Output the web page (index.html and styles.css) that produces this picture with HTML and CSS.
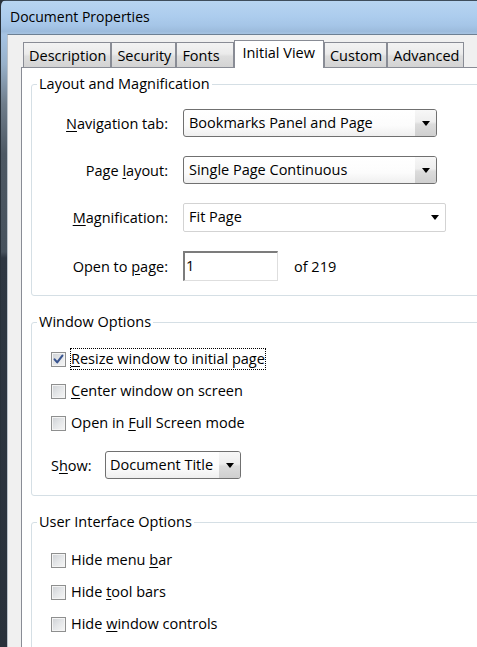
FILE: index.html
```html
<!DOCTYPE html>
<html lang="en">
<head>
<meta charset="utf-8">
<title>Document Properties</title>
<link rel="stylesheet" href="styles.css">
</head>
<body>
<div class="window">
  <div class="titlebar">Document Properties</div>
  <div class="frame">
    <div class="edge"></div>
    <div class="client">
      <div class="tabs">
        <div class="tab">Description</div>
        <div class="tab">Security</div>
        <div class="tab">Fonts</div>
        <div class="tab active">Initial View</div>
        <div class="tab">Custom</div>
        <div class="tab">Advanced</div>
      </div>
      <div class="panel">
        <fieldset class="group g1">
          <legend>Layout and Magnification</legend>
          <div class="form">
            <span class="lbl"><u>N</u>avigation tab:</span>
            <div class="combo c-nav"><span class="val">Bookmarks Panel and Page</span><span class="btn"></span></div>
            <span class="lbl">Page <u>l</u>ayout:</span>
            <div class="combo c-nav"><span class="val">Single Page Continuous</span><span class="btn"></span></div>
            <span class="lbl"><u>M</u>agnification:</span>
            <div class="combo flat c-mag"><span class="val">Fit Page</span><span class="btn"></span></div>
            <span class="lbl">Open to <u>p</u>age:</span>
            <div class="pagerow"><div class="field">1</div><span class="of">of 219</span></div>
          </div>
        </fieldset>

        <fieldset class="group g2">
          <legend>Window Options</legend>
          <div class="checks">
            <div class="check"><span class="cb on"><svg viewBox="0 0 13 13" width="13" height="13"><path d="M2.6 6.4 L5.2 9.4 L10.4 2.6" fill="none" stroke="#3a5590" stroke-width="2.1" stroke-linecap="round" stroke-linejoin="round"/></svg></span><span class="txt focus"><u>R</u>esize window to initial page</span></div>
            <div class="check"><span class="cb"></span><span class="txt"><u>C</u>enter window on screen</span></div>
            <div class="check"><span class="cb"></span><span class="txt">Open in <u>F</u>ull Screen mode</span></div>
          </div>
          <div class="show">
            <span class="showlbl">S<u>h</u>ow:</span>
            <div class="combo c-show"><span class="val">Document Title</span><span class="btn"></span></div>
          </div>
        </fieldset>

        <fieldset class="group g3">
          <legend>User Interface Options</legend>
          <div class="checks">
            <div class="check"><span class="cb"></span><span class="txt">Hide menu <u>b</u>ar</span></div>
            <div class="check"><span class="cb"></span><span class="txt">Hide <u>t</u>ool bars</span></div>
            <div class="check"><span class="cb"></span><span class="txt">Hide <u>w</u>indow controls</span></div>
          </div>
        </fieldset>
      </div>
    </div>
  </div>
</div>
</body>
</html>
```

FILE: styles.css
```css
* { box-sizing: border-box; }
html, body { margin: 0; padding: 0; }
body {
  width: 477px;
  height: 647px;
  overflow: hidden;
  background: #2b333c;
  font-family: "Open Sans", "Noto Sans", sans-serif;
  font-size: 14.5px;
  color: #000;
}
u { text-decoration-thickness: 1px; text-underline-offset: 2px; }

.window {
  display: flex;
  flex-direction: column;
  height: 647px;
  border-left: 1px solid #28313a;
  border-top-left-radius: 6px;
  overflow: hidden;
}
.titlebar {
  height: 34px;
  border-top: 1px solid #3e4d5c;
  padding-left: 9px;
  line-height: 32px;
  font-size: 14px;
  background: linear-gradient(#b7d4f1 0%, #adcdee 45%, #a5c5e7 75%, #9cbbdc 92%, #a6c3e1 100%);
}
.frame { flex: 1; display: flex; min-height: 0; }
.edge {
  width: 6px;
  background: linear-gradient(to bottom, #a6c4e4 0px, #98b1ca 30px, #6f7d8b 70px, #4d5863 120px, #47525d 218px, #2e3742 224px, #29313b 100%);
}
.client {
  flex: 1;
  display: flex;
  flex-direction: column;
  background: #f0f0f0;
  border-top: 1px solid #6d8093;
  border-left: 1px solid #b9c1c9;
  padding-top: 5px;
  min-width: 0;
}

/* tabs */
.tabs {
  display: flex;
  align-items: flex-end;
  height: 27px;
  padding-left: 15px;
}
.tab {
  min-width: 58px;
  height: 25px;
  border: 1px solid #898c95;
  border-bottom: none;
  padding: 0 4px 0 5px;
  line-height: 25px;
  white-space: nowrap;
  background: linear-gradient(#f3f3f3 0%, #ebebeb 45%, #dedede 55%, #d3d3d3 100%);
}
.tab.active {
  position: relative;
  z-index: 1;
  height: 28px;
  margin-bottom: -1px;
  padding: 0 8px 0 7px;
  line-height: 24px;
  background: #fff;
}

/* panel */
.panel {
  flex: 1;
  margin-left: 13px;
  background: #fff;
  border-top: 1px solid #898c95;
  border-left: 1px solid #898c95;
  padding: 6px 0 0 9px;
  min-width: 0;
}
.group {
  margin: 0 -30px 0 0;
  border: 1px solid #d5dfe5;
  border-radius: 3px;
  min-width: 0;
}
.group legend {
  margin-left: 5px;
  padding: 0 2px;
  line-height: 20px;
}
.g1 { padding: 15px 0 14px 0; }
.g2 { margin-top: 16px; padding: 16px 0 16px 0; }
.g3 { margin-top: 16px; padding: 17px 0 40px 0; }

.form {
  display: grid;
  grid-template-columns: 136px auto;
  column-gap: 15px;
  row-gap: 19px;
  align-items: center;
  justify-items: start;
}
.lbl { justify-self: end; white-space: nowrap; }

.combo {
  display: flex;
  align-items: stretch;
  height: 28px;
  border: 1px solid #707070;
  border-radius: 3px;
  background: linear-gradient(#ffffff 0%, #fcfcfc 60%, #efefef 100%);
  overflow: hidden;
}
.combo .val {
  flex: 1;
  padding-left: 5px;
  line-height: 26px;
  white-space: nowrap;
}
.combo .btn {
  width: 21px;
  display: flex;
  align-items: center;
  justify-content: center;
  background: linear-gradient(#f7f7f7 0%, #eeeeee 45%, #dcdcdc 55%, #cfcfcf 100%);
}
.combo .btn::after {
  content: "";
  width: 0;
  height: 0;
  border-left: 4.5px solid transparent;
  border-right: 4.5px solid transparent;
  border-top: 5px solid #000;
  margin-left: 1px;
}
.c-nav { width: 254px; }
.combo.flat {
  border-color: #d3d3d3;
  border-radius: 2px;
  background: #fff;
  height: 29px;
}
.combo.flat .btn { background: none; }
.c-mag { width: 263px; }
.c-show { width: 136px; }
.c-show .val { padding-left: 4px; }

.pagerow { display: flex; align-items: center; }
.field {
  width: 95px;
  height: 30px;
  border-top: 2px solid #7c7c7c;
  border-left: 2px solid #7c7c7c;
  border-right: 1px solid #dedede;
  border-bottom: 1px solid #dedede;
  padding-left: 1px;
  line-height: 26px;
  background: #fff;
}
.of { margin-left: 16px; }

/* checkboxes */
.checks { display: flex; flex-direction: column; gap: 10px; margin-left: 19px; }
.check { display: flex; align-items: center; height: 22px; }
.cb {
  width: 15px;
  height: 15px;
  border: 1px solid #8e8f8f;
  margin-right: 4px;
  background: linear-gradient(135deg, #cdd0d4 0%, #e4e6e8 50%, #f6f6f6 100%);
  box-shadow: inset 0 0 0 1px #f4f4f4;
  display: flex;
  align-items: center;
  justify-content: center;
}
.txt {
  border: 1px dotted transparent;
  line-height: 20px;
  white-space: nowrap;
}
.txt.focus { border-color: #000; }

.show { display: flex; align-items: center; margin-top: 17px; margin-left: 19px; }
.showlbl { width: 54px; }
```
